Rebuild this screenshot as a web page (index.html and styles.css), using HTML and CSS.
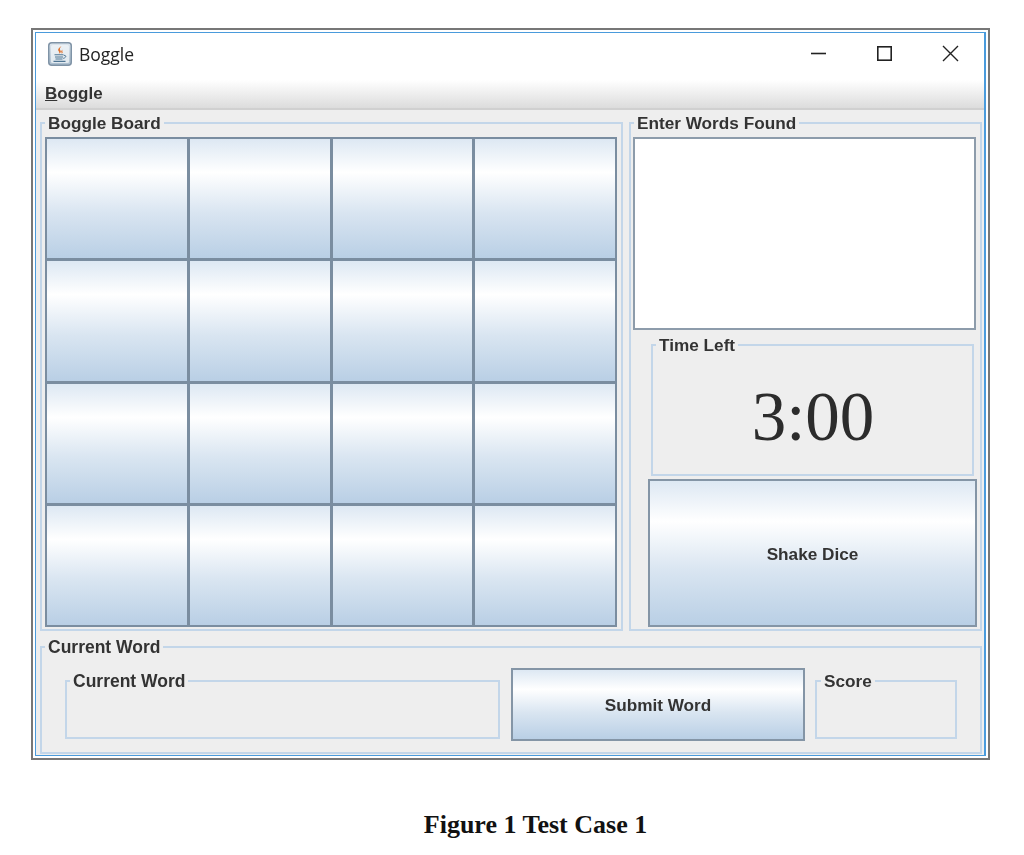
FILE: index.html
```html
<!DOCTYPE html>
<html lang="en">
<head>
<meta charset="utf-8">
<title>Boggle</title>
<link rel="stylesheet" href="styles.css">
</head>
<body>
<div class="window">
  <div class="frame">
    <header class="titlebar">
      <svg class="app-icon" width="24" height="24" viewBox="0 0 24 24">
        <defs>
          <linearGradient id="tile" x1="0" y1="0" x2="0" y2="1">
            <stop offset="0" stop-color="#dfe7ef"/>
            <stop offset="1" stop-color="#a9bccd"/>
          </linearGradient>
        </defs>
        <rect x="0.75" y="0.75" width="22.5" height="22.5" rx="3" fill="url(#tile)" stroke="#7f93a6" stroke-width="1.5"/>
        <rect x="3" y="3" width="18" height="18" rx="1.5" fill="#f2f5f8" opacity="0.75"/>
        <path d="M13.5 4c-3 2.2-4.2 3.6-2.6 5.6.7.9.4 1.6-.3 2.2 2.4-1 2.8-2.2 1.7-3.6-1-1.3-.2-2.4 1.2-4.2z" fill="#e0702a"/>
        <path d="M15 7.6c-1.6.9-2.3 1.7-1.5 2.8.3.5.2.9-.1 1.3 1.4-.7 1.5-1.4 1-2.3-.4-.7 0-1.1.6-1.8z" fill="#e0702a"/>
        <path d="M6.5 12.8h9M7 15h8M7.5 17h7M5.5 19.4h12" stroke="#4f7694" stroke-width="1.1" fill="none"/>
        <path d="M15.8 13.4c2.6-.6 2.9 2.2-.6 3" stroke="#4f7694" stroke-width="1" fill="none"/>
      </svg>
      <span class="app-name">Boggle</span>
      <div class="controls">
        <svg class="ctl" width="17" height="17" viewBox="0 0 17 17"><path d="M1 8.5h15" stroke="#222" stroke-width="1.6"/></svg>
        <svg class="ctl" width="17" height="17" viewBox="0 0 17 17"><rect x="1.8" y="1.8" width="13.4" height="13.4" fill="none" stroke="#222" stroke-width="1.6"/></svg>
        <svg class="ctl" width="17" height="17" viewBox="0 0 17 17"><path d="M1 1l15 15M16 1L1 16" stroke="#222" stroke-width="1.4"/></svg>
      </div>
    </header>
    <nav class="menubar"><span class="menu"><u>B</u>oggle</span></nav>
    <main class="content">
      <div class="top-row">
        <fieldset class="group board">
          <legend>Boggle Board</legend>
          <div class="grid">
            <button class="metal"></button><button class="metal"></button><button class="metal"></button><button class="metal"></button>
            <button class="metal"></button><button class="metal"></button><button class="metal"></button><button class="metal"></button>
            <button class="metal"></button><button class="metal"></button><button class="metal"></button><button class="metal"></button>
            <button class="metal"></button><button class="metal"></button><button class="metal"></button><button class="metal"></button>
          </div>
        </fieldset>
        <fieldset class="group side">
          <legend class="side-legend">Enter Words Found</legend>
          <div class="words"></div>
          <fieldset class="group timer">
            <legend class="inner-legend">Time Left</legend>
            <div class="clock">3:00</div>
          </fieldset>
          <button class="metal shake labelled">Shake Dice</button>
        </fieldset>
      </div>
      <fieldset class="group current">
        <legend class="wide-legend">Current Word</legend>
        <div class="current-row">
          <fieldset class="group word-box"><legend class="inner-legend wide-legend">Current Word</legend></fieldset>
          <button class="metal submit labelled">Submit Word</button>
          <fieldset class="group score-box"><legend class="score-legend">Score</legend></fieldset>
        </div>
      </fieldset>
    </main>
  </div>
</div>
<p class="caption">Figure 1 Test Case 1</p>
</body>
</html>
```
FILE: styles.css
```css
* { box-sizing: border-box; }
html, body { margin: 0; padding: 0; background: #fff; }
body { padding: 28px 0 0 31px; height: 855px; overflow: hidden; font-family: "Liberation Sans", Arial, sans-serif; }

.window { width: 959px; height: 732px; border: 2px solid #777; padding: 2px; background: #fff; filter: blur(0.35px); }
.frame { height: 100%; border: 1px solid #4a9bdc; border-right-width: 2px; display: flex; flex-direction: column; background: #fff; }

.titlebar { height: 47px; flex: none; display: flex; align-items: center; padding: 0 0 6px 12px; background: #fff; }
.app-icon { flex: none; }
.app-name { margin-left: 7px; font: 17.5px "Open Sans", sans-serif; color: #222; }
.controls { margin-left: auto; display: flex; gap: 49px; padding-right: 24px; transform: translateX(-1px); }
.ctl { display: block; }

.menubar { height: 30px; flex: none; padding: 0 0 0 9px; display: flex; align-items: center; background: linear-gradient(#fff, #dcdcdc); border-bottom: 2px solid #d0d0d0; }
.menu { font-weight: bold; font-size: 17px; color: #333; }

.content { flex: 1; background: #eee; padding: 3px 2px 0 4px; display: flex; flex-direction: column; }
.top-row { display: flex; gap: 6px; height: 518px; flex: none; }

.group { margin: 0; min-width: 0; border: 2px solid #c3d6e9; padding: 0; }
.group legend { padding: 0 3px; height: 20px; line-height: 20px; font-weight: bold; font-size: 17.2px; color: #333; }
.group .wide-legend { font-size: 17.5px; }
.group .inner-legend { margin-left: 3px; }
.group .score-legend { margin-left: 4px; }

.board { width: 583px; padding: 4px 4px 2px 3px; }
.grid { height: 490px; display: grid; grid-template-columns: repeat(4, 1fr); grid-template-rows: repeat(4, 1fr); gap: 3px; background: #7a8da0; border: 2px solid #7a8da0; }

.metal { margin: 0; padding: 0; border: 0; background: linear-gradient(#dde8f3 0%, #fff 28%, #d9e5f1 62%, #b9cfe5 100%); }
.labelled { padding-top: 2px; font: bold 17.2px "Liberation Sans", Arial, sans-serif; color: #333; border: 2px solid #8495a6; }

.side { width: 353px; padding: 4px 0 2px 2px; display: flex; flex-direction: column; }
.side-legend { margin-left: 1px; }
.words { height: 193px; width: 343px; flex: none; background: #fff; border: 2px solid #8d9cab; }
.timer { width: 323px; height: 141px; flex: none; margin: 5px 0 0 18px; }
.clock { height: 121px; padding: 3px 0 0 1px; display: flex; align-items: center; justify-content: center; font: 69px "Liberation Serif", "Times New Roman", serif; color: #2c2c2c; }
.shake { width: 329px; flex: 1; margin: 3px 0 0 15px; }

.current { height: 117px; margin-top: 6px; padding: 11px 0 0 3px; }
.current-row { height: 73px; display: flex; align-items: center; }
.word-box { width: 435px; height: 68px; margin-left: 20px; }
.submit { width: 294px; height: 73px; margin-left: 11px; }
.score-box { width: 142px; height: 68px; margin-left: 10px; }

.caption { margin: 50px 0 0 -31px; padding-left: 47px; width: 1024px; text-align: center; font: bold 26px "Liberation Serif", "Times New Roman", serif; color: #111; }
```
